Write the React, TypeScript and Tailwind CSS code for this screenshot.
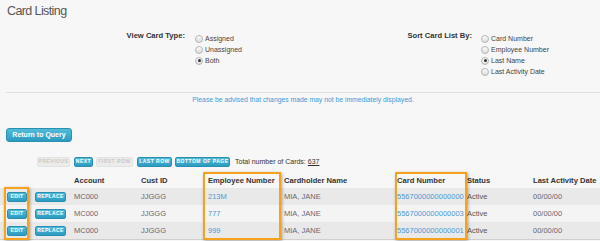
import React from "react";

const font = { fontFamily: '"Liberation Sans", Arial, sans-serif' };

function Radio({ checked, label }: { checked?: boolean; label: string }) {
  return (
    <div className="flex items-center h-[11px]">
      <span className="relative w-[8px] h-[8px] rounded-full border border-[#b5b5b5] bg-gradient-to-b from-[#fdfdfd] to-[#dcdcdc] flex items-center justify-center">
        {checked && <span className="w-[3px] h-[3px] rounded-full bg-[#333]" />}
      </span>
      <span className="ml-[2px] text-[7px] leading-[11px] text-[#444]">{label}</span>
    </div>
  );
}

function TealBtn({ children, className = "" }: { children: React.ReactNode; className?: string }) {
  return (
    <span
      className={
        "flex items-center justify-center whitespace-nowrap rounded-[2px] border border-[#2a90b3] bg-gradient-to-b from-[#52bbd8] to-[#2a9bc0] text-white font-bold " +
        className
      }
    >
      {children}
    </span>
  );
}

function GrayBtn({ children, className = "" }: { children: React.ReactNode; className?: string }) {
  return (
    <span
      className={
        "flex items-center justify-center whitespace-nowrap rounded-[2px] border border-[#e2e2e2] bg-[#ececec] text-[#c9c9c9] font-bold " +
        className
      }
    >
      {children}
    </span>
  );
}

const cols = "grid grid-cols-[31px_39px_67px_67px_76px_113px_70px_66px_71px]";

const rows = [
  { emp: "213M", card: "5567000000000000", bg: "bg-[#e9e9e9]" },
  { emp: "777", card: "5567000000000003", bg: "bg-[#f4f4f4]" },
  { emp: "999", card: "5567000000000001", bg: "bg-[#e9e9e9]" },
];

export default function App() {
  return (
    <div className="relative w-[600px] h-[241px] overflow-hidden bg-[#f7f7f7]" style={font}>
      <div className="pt-[3px] pl-[7px] text-[12.5px] leading-[16px] text-[#555] tracking-[-0.6px]">
        Card Listing
      </div>

      <div className="mt-[11px] flex">
        <div className="w-[185px] text-right text-[7.6px] leading-[11px] font-bold text-[#333]">
          View Card Type:
        </div>
        <div className="w-[200px] pl-[10px] pt-[3px]">
          <Radio label="Assigned" />
          <Radio label="Unassigned" />
          <Radio label="Both" checked />
        </div>
        <div className="w-[87px] text-right text-[7.6px] leading-[11px] font-bold text-[#333]">
          Sort Card List By:
        </div>
        <div className="pl-[9px] pt-[3px]">
          <Radio label="Card Number" />
          <Radio label="Employee Number" />
          <Radio label="Last Name" checked />
          <Radio label="Last Activity Date" />
        </div>
      </div>

      <div className="mt-[15px] ml-[6px] border-t border-[#e0e0e0]" />
      <div className="mt-[2px] pl-[6px] text-center text-[6.8px] leading-[10px] text-[#3d9bd8]">
        Please be advised that changes made may not be immediately displayed.
      </div>

      <div className="mt-[23px] ml-[6px] flex">
        <TealBtn className="w-[66px] h-[14px] text-[7px] rounded-[3px]">Return to Query</TealBtn>
      </div>

      <div className="mt-[15px] ml-[37px] flex items-center h-[10px] text-[5px] tracking-[0.5px]">
        <GrayBtn className="w-[33px] h-[10px]">PREVIOUS</GrayBtn>
        <TealBtn className="ml-[4px] w-[19px] h-[10px]">NEXT</TealBtn>
        <GrayBtn className="ml-[3px] w-[37px] h-[10px]">FIRST ROW</GrayBtn>
        <TealBtn className="ml-[4px] w-[35px] h-[10px]">LAST ROW</TealBtn>
        <TealBtn className="ml-[3px] w-[55px] h-[10px]">BOTTOM OF PAGE</TealBtn>
        <span className="ml-[5px] text-[7px] tracking-normal text-[#333] leading-[10px]">
          Total number of Cards: <span className="underline">637</span>
        </span>
      </div>

      <div className="mt-[7px]">
        <div className={cols + " h-[14px] items-center text-[7.6px] font-bold text-[#333]"}>
          <div />
          <div />
          <div className="pl-[4px]">Account</div>
          <div className="pl-[4px]">Cust ID</div>
          <div className="pl-[4px]">Employee Number</div>
          <div className="pl-[4px]">Cardholder Name</div>
          <div className="pl-[4px]">Card Number</div>
          <div className="pl-[4px]">Status</div>
          <div className="pl-[4px] whitespace-nowrap">Last Activity Date</div>
        </div>
        {rows.map((r, i) => (
          <div
            key={i}
            className={cols + " h-[17px] items-center text-[7.5px] text-[#6a6670] " + r.bg}
          >
            <div className="pl-[7px]">
              <TealBtn className="w-[20px] h-[10px] text-[5px] tracking-[0.4px]">EDIT</TealBtn>
            </div>
            <div className="pl-[4px]">
              <TealBtn className="w-[31px] h-[10px] text-[5px] tracking-[0.4px]">REPLACE</TealBtn>
            </div>
            <div className="pl-[4px]">MC000</div>
            <div className="pl-[4px]">JJGGG</div>
            <div className="pl-[4px] text-[#4a9ad6]">{r.emp}</div>
            <div className="pl-[4px]">MIA, JANE</div>
            <div className="pl-[4px] text-[#4a9ad6] whitespace-nowrap">{r.card}</div>
            <div className="pl-[4px] text-[#555]">Active</div>
            <div className="pl-[4px]">00/00/00</div>
          </div>
        ))}
        <div className="h-[1px] bg-[#cfcfcf]" />
      </div>

      <div className="absolute left-[4px] top-[187px] w-[25px] h-[53px] border-2 border-[#f6a21c] shadow-[1px_1px_3px_rgba(0,0,0,0.35)]" />
      <div className="absolute left-[203px] top-[172px] w-[78px] h-[68px] border-2 border-[#f6a21c] shadow-[1px_1px_3px_rgba(0,0,0,0.35)]" />
      <div className="absolute left-[395px] top-[172px] w-[72px] h-[68px] border-2 border-[#f6a21c] shadow-[1px_1px_3px_rgba(0,0,0,0.35)]" />
    </div>
  );
}
